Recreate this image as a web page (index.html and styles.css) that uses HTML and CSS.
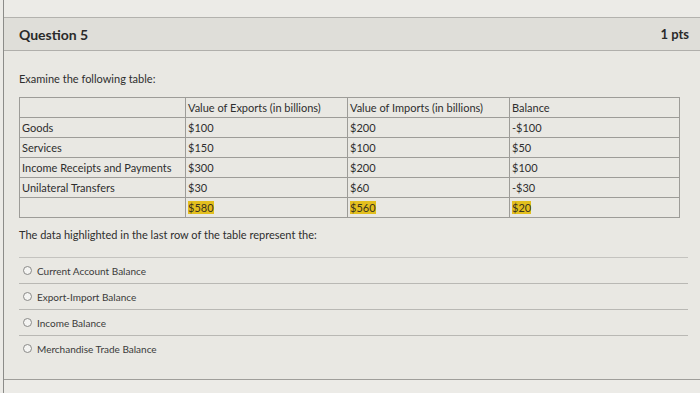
FILE: index.html
```html
<!DOCTYPE html>
<html>
<head>
<meta charset="utf-8">
<link rel="stylesheet" href="styles.css">
</head>
<body>
<div class="page">
  <div class="question">
    <div class="q-header">
      <span class="q-title">Question 5</span>
      <span class="q-pts">1 pts</span>
    </div>
    <div class="q-body">
      <p class="prompt">Examine the following table:</p>
      <table class="data">
        <colgroup>
          <col class="c1"><col class="c2"><col class="c3"><col class="c4">
        </colgroup>
        <tr><td></td><td>Value of Exports (in billions)</td><td>Value of Imports (in billions)</td><td>Balance</td></tr>
        <tr><td>Goods</td><td>$100</td><td>$200</td><td>-$100</td></tr>
        <tr><td>Services</td><td>$150</td><td>$100</td><td>$50</td></tr>
        <tr><td>Income Receipts and Payments</td><td>$300</td><td>$200</td><td>$100</td></tr>
        <tr><td>Unilateral Transfers</td><td>$30</td><td>$60</td><td>-$30</td></tr>
        <tr><td></td><td><span class="hl">$580</span></td><td><span class="hl">$560</span></td><td><span class="hl">$20</span></td></tr>
      </table>
      <p class="prompt2">The data highlighted in the last row of the table represent the:</p>
      <ul class="answers">
        <li><span class="radio"></span>Current Account Balance</li>
        <li><span class="radio"></span>Export-Import Balance</li>
        <li><span class="radio"></span>Income Balance</li>
        <li><span class="radio"></span>Merchandise Trade Balance</li>
      </ul>
    </div>
  </div>
</div>
</body>
</html>
```
FILE: styles.css
```css
html, body {
  margin: 0;
  padding: 0;
  background: #ecebe7;
}
body {
  font-family: Lato, "Open Sans", sans-serif;
  color: #2e2e2e;
}
.page {
  margin-left: 3px;
  border-left: 1px solid #8c8c89;
  min-height: 393px;
  padding-top: 17px;
  box-sizing: border-box;
}
.question {
  border-top: 1px solid #b3b2ae;
  border-bottom: 1px solid #9f9e9a;
  background: #e9e8e3;
}
.q-header {
  height: 32px;
  background: #dfded9;
  border-bottom: 1px solid #b0afab;
  display: flex;
  align-items: center;
  justify-content: space-between;
  padding: 0 11px 0 15px;
}
.q-title {
  font-size: 14px;
  font-weight: 700;
  color: #2a2a2a;
}
.q-pts {
  font-size: 13px;
  font-weight: 700;
  color: #2a2a2a;
}
.q-body {
  padding: 21px 11px 18px 15px;
}
.prompt {
  margin: 0 0 11px 0;
  font-size: 11px;
  line-height: 14px;
}
.data {
  border-collapse: collapse;
  width: 660px;
  table-layout: fixed;
  font-size: 11px;
}
.c1 { width: 166px; }
.c2 { width: 162px; }
.c3 { width: 162px; }
.c4 { width: 170px; }
.data td {
  border: 1px solid #9d9c98;
  height: 19px;
  padding: 0 2px;
  line-height: 14px;
  vertical-align: middle;
}
.hl {
  background: #e3bf1e;
  color: #3a3320;
}
.prompt2 {
  margin: 10px 0 15px 0;
  font-size: 11px;
  line-height: 14px;
}
.answers {
  list-style: none;
  margin: 0 1px 0 0;
  padding: 0;
  border-top: 1px solid #c4c3bf;
}
.answers li {
  height: 25px;
  border-bottom: 1px solid #b9b8b4;
  display: flex;
  align-items: center;
  gap: 5px;
  padding-left: 4px;
  font-size: 10px;
  color: #3a3a3a;
}
.answers li:last-child {
  border-bottom: none;
}
.radio {
  width: 7px;
  height: 7px;
  border: 1px solid #8a8a88;
  border-radius: 50%;
  background: #f4f4f2;
}
```
